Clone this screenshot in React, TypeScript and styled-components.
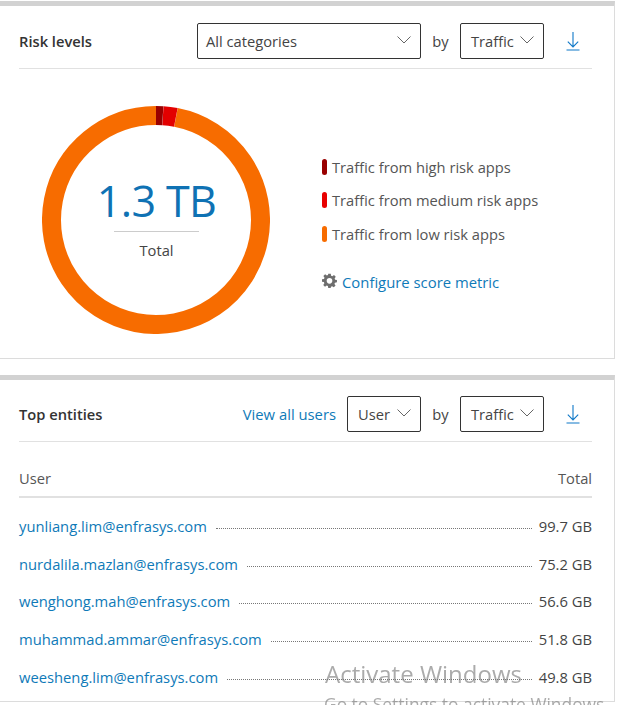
import React from "react";
import styled, { createGlobalStyle } from "styled-components";

const Global = createGlobalStyle`
  html, body { margin: 0; padding: 0; background: #fff; }
  body { width: 620px; height: 705px; overflow: hidden; font-family: "Open Sans", "Noto Sans", sans-serif; color: #333; }
`;
const Page = styled.div`
  width: 615px;
  height: 705px;
  padding-top: 1px;
  box-sizing: border-box;
`;
const Card = styled.section<{ $h: number; $mt?: number }>`
  box-sizing: border-box;
  height: ${p => p.$h}px;
  margin-top: ${p => p.$mt ?? 0}px;
  border-top: 5px solid #d2d2d2;
  border-right: 1px solid #dcdcdc;
  border-bottom: 1px solid #dcdcdc;
  padding: 0 22px 0 19px;
`;
const Header = styled.header<{ $h: number; $pt: number }>`
  height: ${p => p.$h}px;
  box-sizing: border-box;
  border-bottom: 1px solid #e1e1e1;
  display: flex;
  align-items: center;
  font-size: 14.7px;
  padding-top: ${p => p.$pt}px;
`;
const Title = styled.h2`
  margin: 0 auto 0 0;
  font-size: 14.7px;
  font-weight: 600;
  color: #333;
`;
const Select = styled.div<{ $w: number; $pl?: number }>`
  box-sizing: border-box;
  width: ${p => p.$w}px;
  height: 36px;
  border: 1px solid #333;
  border-radius: 2px;
  display: flex;
  align-items: center;
  justify-content: space-between;
  padding: 0 9px 0 ${p => p.$pl ?? 10}px;
  font-size: 14.7px;
  color: #444;
  svg { margin-bottom: 3px; }
`;
const By = styled.span`
  width: 39px;
  text-align: center;
  font-size: 14.7px;
  color: #444;
`;
const Download = styled.a`
  margin-left: 22px;
  margin-right: 12px;
  display: flex;
  color: #0f78c8;
`;
const ViewAll = styled.a`
  color: #0f7ab8;
  font-size: 14.8px;
  margin-right: 11px;
`;
const Body = styled.div`
  display: flex;
  padding: 37px 0 0 23px;
`;
const Donut = styled.div`
  position: relative;
  width: 228px;
  height: 228px;
  flex: none;
`;
const Center = styled.div`
  position: absolute;
  inset: 0;
  display: flex;
  flex-direction: column;
  align-items: center;
  padding-top: 66px;
  padding-left: 1px;
  box-sizing: border-box;
`;
const Big = styled.div`
  font-size: 43px;
  line-height: 58px;
  margin-bottom: 1px;
  color: #0f72b4;
  letter-spacing: -0.6px;
`;
const Rule = styled.div`
  width: 85px;
  border-top: 1px solid #ccc;
`;
const Sub = styled.div`
  font-size: 14.7px;
  line-height: 20px;
  margin-top: 8px;
  color: #444;
`;
const Side = styled.div`
  margin-left: 52px;
  padding-top: 44px;
`;
const Legend = styled.div`
  display: flex;
  align-items: center;
  height: 33.5px;
  font-size: 14.7px;
  color: #555;
`;
const Swatch = styled.i<{ $c: string }>`
  width: 5px;
  height: 16px;
  border-radius: 2.5px;
  background: ${p => p.$c};
  margin-right: 5px;
`;
const Configure = styled.a`
  display: flex;
  align-items: center;
  gap: 5px;
  margin-top: 21px;
  font-size: 14.85px;
  color: #0f7ab8;
  svg { margin-top: -2px; }
`;
const TableHead = styled.div`
  display: flex;
  justify-content: space-between;
  align-items: center;
  height: 56px;
  padding-top: 18px;
  box-sizing: border-box;
  border-bottom: 2px solid #e1e1e1;
  font-size: 14.7px;
  color: #555;
`;
const Rows = styled.div`
  padding-top: 9px;
`;
const Row = styled.div`
  display: flex;
  align-items: center;
  height: 37.7px;
  font-size: 14.75px;
`;
const UserLink = styled.a`
  color: #0f7ab8;
  flex: none;
`;
const Dots = styled.span`
  flex: 1;
  margin: 5px 7px 0 9px;
  height: 0;
  border-bottom: 1px dotted #777;
`;
const Amount = styled.span`
  flex: none;
  color: #444;
`;
const Watermark = styled.div`
  position: fixed;
  left: 325px;
  top: 658px;
  color: rgba(120, 120, 120, 0.62);
  font-size: 24px;
  line-height: 32px;
  white-space: nowrap;
`;
const WatermarkSub = styled.div`
  font-size: 17.4px;
  line-height: 20px;
  margin-top: 4px;
  margin-left: -1px;
`;

const Chevron = () => (
  <svg width="14" height="8" viewBox="0 0 14 8" fill="none" stroke="#666" strokeWidth="1">
    <path d="M.5.5 7 7 13.5.5" />
  </svg>
);
const DownloadIcon = () => (
  <svg width="14" height="19" viewBox="0 0 14 19" fill="none" stroke="currentColor" strokeWidth="1.1">
    <path d="M7 0v15M1.8 9.6 7 15l5.200-5.400M.5 18h13" />
  </svg>
);
const Gear = () => (
  <svg width="15" height="15" viewBox="0 0 24 24" fill="#6e6e6e">
    <path fillRule="evenodd" d="M10 1h4l.6 3.200 1.900.8 2.700-1.800 2.800 2.800-1.800 2.700.8 1.900L23.900 11v3.900l-3.200.6-.8 1.900 1.800 2.700-2.800 2.800-2.700-1.800-1.900.8L13.900 24H10l-.6-3.200-1.900-.8-2.700 1.800L2 19l1.800-2.700-.8-1.900L0 13.900V10l3.200-.6.8-1.900L2.200 4.800 5 2l2.700 1.800 1.900-.8L10 1Zm2 7a4.500 4.500 0 1 0 0 9 4.500 4.500 0 0 0 0-9Z" />
  </svg>
);

const R = 104.5;
const C = 2 * Math.PI * R;
const segs = [
  { c: "#f76c00", from: 11, to: 360 },
  { c: "#e30000", from: 3.8, to: 11 },
  { c: "#990000", from: 0, to: 3.8 },
];
const Ring = () => (
  <svg width="228" height="228" viewBox="0 0 228 228">
    {segs.map(s => (
      <circle
        key={s.c}
        cx="114"
        cy="114"
        r={R}
        fill="none"
        stroke={s.c}
        strokeWidth="19"
        strokeDasharray={`${((s.to - s.from) / 360) * C} ${C}`}
        transform={`rotate(${s.from - 90} 114 114)`}
      />
    ))}
  </svg>
);

const users = [
  ["yunliang.lim@enfrasys.com", "99.7 GB"],
  ["nurdalila.mazlan@enfrasys.com", "75.2 GB"],
  ["wenghong.mah@enfrasys.com", "56.6 GB"],
  ["muhammad.ammar@enfrasys.com", "51.8 GB"],
  ["weesheng.lim@enfrasys.com", "49.8 GB"],
];

export default function App() {
  return (
    <Page>
      <Global />
      <Card $h={358}>
        <Header $h={63} $pt={8}>
          <Title>Risk levels</Title>
          <Select $w={224} $pl={8}>All categories<Chevron /></Select>
          <By>by</By>
          <Select $w={84}>Traffic<Chevron /></Select>
          <Download><DownloadIcon /></Download>
        </Header>
        <Body>
          <Donut>
            <Ring />
            <Center>
              <Big>1.3 TB</Big>
              <Rule />
              <Sub>Total</Sub>
            </Center>
          </Donut>
          <Side>
            <Legend><Swatch $c="#990000" />Traffic from high risk apps</Legend>
            <Legend><Swatch $c="#e80000" />Traffic from medium risk apps</Legend>
            <Legend><Swatch $c="#f76c00" />Traffic from low risk apps</Legend>
            <Configure><Gear />Configure score metric</Configure>
          </Side>
        </Body>
      </Card>
      <Card $h={327} $mt={16}>
        <Header $h={62} $pt={7}>
          <Title>Top entities</Title>
          <ViewAll>View all users</ViewAll>
          <Select $w={74}>User<Chevron /></Select>
          <By>by</By>
          <Select $w={84}>Traffic<Chevron /></Select>
          <Download><DownloadIcon /></Download>
        </Header>
        <TableHead><span>User</span><span>Total</span></TableHead>
        <Rows>
          {users.map(([u, a]) => (
            <Row key={u}>
              <UserLink>{u}</UserLink>
              <Dots />
              <Amount>{a}</Amount>
            </Row>
          ))}
        </Rows>
      </Card>
      <Watermark>
        Activate Windows
        <WatermarkSub>Go to Settings to activate Windows.</WatermarkSub>
      </Watermark>
    </Page>
  );
}
